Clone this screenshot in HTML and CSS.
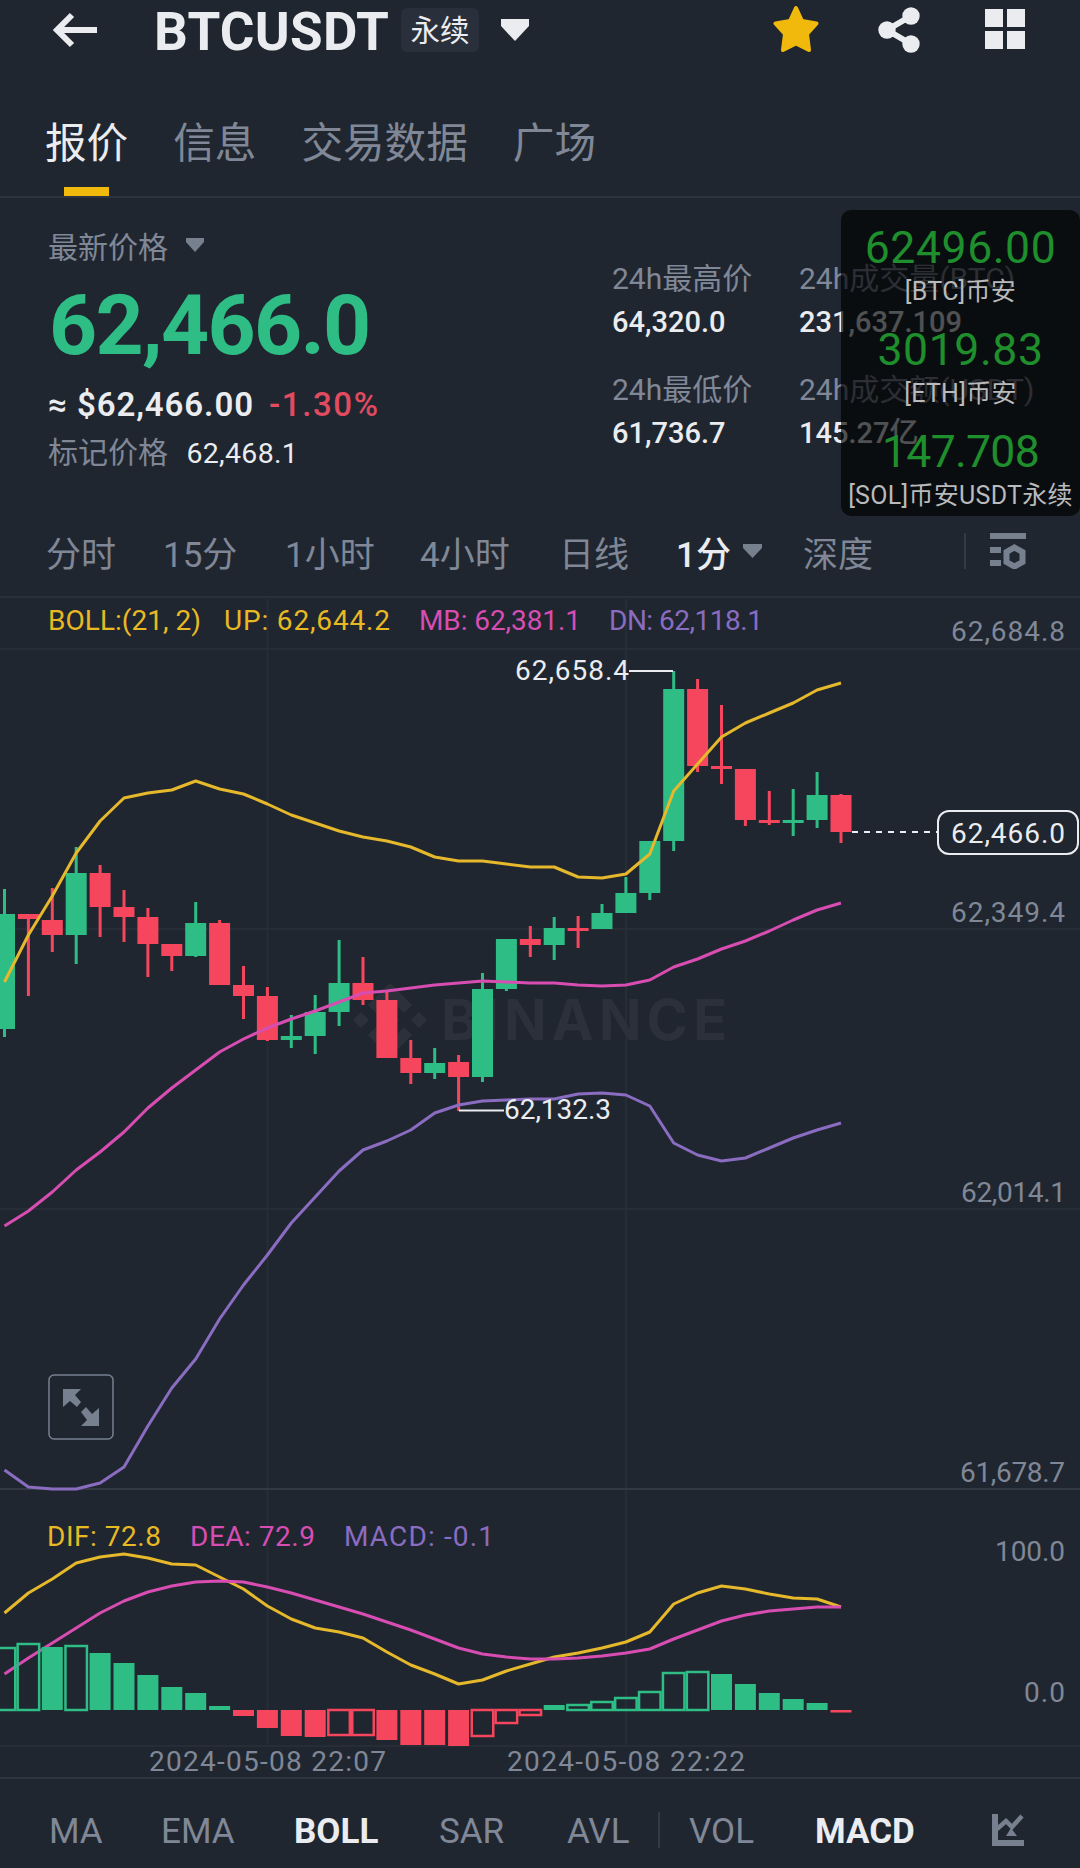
FILE: index.html
```html
<!DOCTYPE html>
<html lang="zh-CN">
<head>
    <meta charset="UTF-8">
    <meta name="viewport" content="width=device-width, initial-scale=1.0">
    <title>BTCUSDT 永续</title>
    <link rel="stylesheet" href="styles.css">
</head>
<body>
    <div class="app">
        <header class="header">
            <svg class="icon-back" width="46" height="36" viewBox="0 0 46 36">
                <path d="M20 3L5 18L20 33M5 18H45" fill="none" stroke="#eaecef" stroke-width="6"/>
            </svg>
            <h1 class="symbol">BTCUSDT</h1>
            <span class="badge">永续</span>
            <svg class="icon-caret" width="28" height="22" viewBox="0 0 28 22">
                <path d="M0 0H28V7L14 22L0 7Z" fill="#eaecef"/>
            </svg>
            <div class="actions">
                <svg class="icon-star" width="46" height="48" viewBox="0 0 46 48">
                    <path d="M23 3L29 16L43.500 18.500L34 29L36 45L23 38.500L10 45L12 29L2.500 18.500L17 16Z" fill="#f0b90b" stroke="#f0b90b" stroke-width="4" stroke-linejoin="round"/>
                </svg>
                <svg width="42" height="46" viewBox="0 0 42 46">
                    <path d="M33 9L9 23L33 37" fill="none" stroke="#eaecef" stroke-width="6"/>
                    <circle cx="33" cy="9" r="8.700" fill="#eaecef"/>
                    <circle cx="9" cy="23" r="8.700" fill="#eaecef"/>
                    <circle cx="33" cy="37" r="8.700" fill="#eaecef"/>
                </svg>
                <svg class="icon-grid" width="40" height="40" viewBox="0 0 40 40">
                    <path d="M0 0H18V18H0ZM22 0H40V18H22ZM0 22H18V40H0ZM22 22H40V40H22Z" fill="#eaecef"/>
                </svg>
            </div>
        </header>

        <nav class="tabs">
            <a class="tab active">报价</a>
            <a class="tab">信息</a>
            <a class="tab">交易数据</a>
            <a class="tab">广场</a>
        </nav>

        <section class="quote">
            <div class="price-box">
                <div class="price-label">最新价格
                    <svg width="18" height="14" viewBox="0 0 18 14"><path d="M0 0H18V4L9 14L0 4Z" fill="#76808f"/></svg>
                </div>
                <div class="price">62,466.0</div>
                <div class="fiat">≈ $62,466.00 <span class="change">-1.30%</span></div>
                <div class="mark">标记价格 <span>62,468.1</span></div>
            </div>
            <div class="stats">
                <div class="stat"><p>24h最高价</p><b>64,320.0</b></div>
                <div class="stat"><p>24h成交量(BTC)</p><b>231,637.109</b></div>
                <div class="stat"><p>24h最低价</p><b>61,736.7</b></div>
                <div class="stat"><p>24h成交额(USDT)</p><b>145.27亿</b></div>
            </div>
            <!-- 悬浮价格窗 -->
            <div class="floating">
                <div class="coin"><strong>62496.00</strong><span>[BTC]币安</span></div>
                <div class="coin"><strong>3019.83</strong><span>[ETH]币安</span></div>
                <div class="coin"><strong class="tight">147.708</strong><span>[SOL]币安USDT永续</span></div>
            </div>
        </section>

        <nav class="periods">
            <a>分时</a>
            <a>15分</a>
            <a>1小时</a>
            <a>4小时</a>
            <a>日线</a>
            <a class="active">1分 <svg width="19" height="14" viewBox="0 0 19 14"><path d="M0 0H19V4L9.500 14L0 4Z" fill="#76808f"/></svg></a>
            <a>深度</a>
            <i class="divider"></i>
            <svg width="36" height="36" viewBox="0 0 36 36">
                <path d="M0 0H36V6H0ZM0 14H11V20H0ZM0 27H11V33H0Z" fill="#76808f"/>
                <path d="M24.500 14.500L32.500 19V29L24.500 33.500L16.500 29V19Z" fill="none" stroke="#76808f" stroke-width="6"/>
            </svg>
        </nav>

        <div class="chart">
            <svg width="1080" height="1180" viewBox="0 598 1080 1180">
                <g class="grid">
                    <path d="M0 649H1080M0 929H1080M0 1209H1080M0 1746H1080M267.500 599V1746M626 599V1746"/>
                    <path class="strong" d="M0 1489H1080"/>
                </g>
                <!-- 水印 -->
                <g class="watermark">
                    <path d="M390 983L412 1005L404 1013L390 999L376 1013L368 1005ZM390 1057L412 1035L404 1027L390 1041L376 1027L368 1035ZM353 1020L361 1012L369 1020L361 1028ZM411 1020L419 1012L427 1020L419 1028ZM390 1011L399 1020L390 1029L381 1020Z"/>
                    <text x="441" y="1040" textLength="286">BINANCE</text>
                </g>
                <g id="candles"></g>
                <g id="lines"></g>
                <g id="macd"></g>

                <g class="legend">
                    <text class="up" x="48" y="630" textLength="153">BOLL:(21, 2)</text>
                    <text class="up" x="224" y="630" textLength="166">UP: 62,644.2</text>
                    <text class="mb" x="419" y="630" textLength="162">MB: 62,381.1</text>
                    <text class="dn" x="609" y="630" textLength="154">DN: 62,118.1</text>
                    <text class="up" x="47" y="1546" textLength="114">DIF: 72.8</text>
                    <text class="mb" x="190" y="1546" textLength="125">DEA: 72.9</text>
                    <text class="dn" x="344" y="1546" textLength="150">MACD: -0.1</text>
                </g>

                <g class="axis">
                    <text x="951" y="641" textLength="114">62,684.8</text>
                    <text x="951" y="922" textLength="114">62,349.4</text>
                    <text x="961" y="1202" textLength="105">62,014.1</text>
                    <text x="960" y="1482" textLength="105">61,678.7</text>
                    <text x="995" y="1561" textLength="70">100.0</text>
                    <text x="1024" y="1702" textLength="41">0.0</text>
                    <text x="149" y="1771" textLength="237">2024-05-08 22:07</text>
                    <text x="507" y="1771" textLength="238">2024-05-08 22:22</text>
                </g>

                <g class="marker">
                    <path d="M629 671H673M459 1110.500H504"/>
                    <path d="M852 832H937" stroke-dasharray="6 6"/>
                    <rect x="938" y="811" width="140" height="43" rx="11"/>
                    <text x="951" y="843" textLength="114">62,466.0</text>
                    <text x="515" y="680" textLength="114">62,658.4</text>
                    <text x="504" y="1119" textLength="107">62,132.3</text>
                </g>

                <g class="expand">
                    <rect x="49" y="1375" width="64" height="64" rx="5"/>
                    <path d="M63 1389H81L75 1395L81 1402L77 1407L70 1401L63 1407ZM99 1426H81L87 1420L81 1412L86 1407L92 1414L99 1408Z"/>
                </g>
            </svg>
        </div>

        <nav class="indicators">
            <a>MA</a>
            <a>EMA</a>
            <a class="active">BOLL</a>
            <a>SAR</a>
            <a>AVL</a>
            <i class="divider"></i>
            <a>VOL</a>
            <a class="active">MACD</a>
            <svg width="32" height="32" viewBox="0 0 32 32">
                <path d="M0 0H6V26H32V32H0Z" fill="#76808f"/>
                <path d="M5 15L14 7L20 13L30 2" fill="none" stroke="#76808f" stroke-width="4.500"/>
                <path d="M19 14L25 22H14Z" fill="#76808f"/>
            </svg>
        </nav>
    </div>
    <script src="kline.js"></script>
</body>
</html>
```
FILE: styles.css
```css
body {
    margin: 0;
    background: #1f2630;
    color: #eaecef;
    font-family: Roboto, 'Noto Sans CJK SC', sans-serif;
}
.app {
    width: 1080px;
    height: 1868px;
    overflow: hidden;
}
svg {
    display: block;
    flex: none;
}

/* header */
.header {
    display: flex;
    align-items: center;
    height: 60px;
    padding: 0 55px 0 52px;
}
.symbol {
    width: 232px;
    margin: 3px 0 0 56px;
    font-size: 53px;
    font-weight: 700;
    line-height: 60px;
    letter-spacing: 0.3px;
}
.badge {
    width: 78px;
    height: 44px;
    margin: -1px 22px 0 15px;
    border-radius: 6px;
    background: #29303b;
    font-size: 29.5px;
    line-height: 46px;
    text-align: center;
}
.actions {
    display: flex;
    align-items: center;
    margin-left: auto;
    gap: 59px;
}
.icon-star {
    margin-top: -3px;
}
.icon-grid {
    margin: -2px 0 0 6px;
}

/* tabs */
.tabs {
    display: flex;
    gap: 45px;
    height: 138px;
    padding-left: 45px;
    border-bottom: 2px solid #2d3440;
    box-sizing: border-box;
}
.tab {
    display: flex;
    flex-direction: column;
    align-items: center;
    justify-content: space-between;
    padding-top: 54px;
    color: #808796;
    font-size: 41.6px;
    line-height: 60px;
}
.tab.active {
    color: #eaecef;
}
.tab.active::after {
    content: "";
    width: 45px;
    height: 9px;
    background: #f0b90b;
}

/* quote */
.quote {
    position: relative;
    display: flex;
    height: 310px;
}
.price-box {
    flex: none;
    width: 612px;
    padding: 25px 0 0 48px;
    box-sizing: border-box;
}
.price-label {
    display: flex;
    align-items: center;
    gap: 18px;
    height: 44px;
    color: #808796;
    font-size: 30px;
}
.price {
    height: 112px;
    margin-left: 1px;
    color: #2ebd85;
    font-size: 84px;
    font-weight: 700;
    line-height: 118px;
    letter-spacing: -1.7px;
}
.fiat {
    height: 50px;
    font-size: 33px;
    font-weight: 600;
    line-height: 52px;
    letter-spacing: 0.9px;
}
.change {
    margin-left: 6px;
    color: #e04b60;
    font-weight: 500;
    letter-spacing: 1.6px;
}
.mark {
    color: #808796;
    font-size: 30px;
    line-height: 47px;
}
.mark span {
    margin-left: 11px;
    color: #eaecef;
    font-size: 28.5px;
    letter-spacing: 0.3px;
}
.stats {
    display: grid;
    grid-template-columns: 187px auto;
    grid-auto-rows: 111px;
    padding-top: 59px;
    white-space: nowrap;
}
.stat p {
    margin: 0;
    color: #808796;
    font-size: 30px;
    line-height: 44px;
}
.stat b {
    display: block;
    font-size: 29px;
    font-weight: 500;
    line-height: 43px;
}

.floating {
    position: absolute;
    top: 12px;
    left: 841px;
    width: 239px;
    height: 306px;
    padding-top: 11px;
    box-sizing: border-box;
    border-radius: 10px;
    background: rgba(0, 0, 0, 0.66);
    text-align: center;
    white-space: nowrap;
}
.coin {
    height: 102px;
}
.coin strong,
.coin span {
    display: block;
}
.coin strong {
    color: #1f8e2c;
    font-size: 44.5px;
    font-weight: 400;
    line-height: 54px;
    letter-spacing: 0.6px;
}
.coin .tight {
    letter-spacing: -0.7px;
}
.coin span {
    color: #b9babc;
    font-size: 25px;
    line-height: 34px;
    letter-spacing: 0.3px;
}

/* periods */
.periods {
    display: grid;
    grid-template-columns: 117px 122px 135px 139px 117px 127px 161px 26px 36px;
    align-items: center;
    height: 90px;
    padding: 0 0 2px 46px;
    border-bottom: 2px solid #29303a;
    box-sizing: border-box;
    color: #808796;
    font-size: 35px;
    white-space: nowrap;
}
.periods .active {
    display: flex;
    align-items: center;
    gap: 12px;
    color: #eaecef;
    font-weight: 500;
}
.divider {
    width: 2px;
    height: 36px;
    background: #323a46;
}

/* chart */
.chart text {
    font-size: 28px;
}
.grid path {
    fill: none;
    stroke: #262d37;
    stroke-width: 2;
}
.grid .strong {
    stroke: #323943;
}
.watermark {
    fill: #2b303b;
}
.chart .watermark text {
    font-family: Inter, sans-serif;
    font-size: 56px;
    font-weight: 700;
}
.legend .up { fill: #e8b923; }
.legend .mb { fill: #d84db2; }
.legend .dn { fill: #8a6cc0; }
.axis {
    fill: #808796;
}
.marker path,
.marker rect {
    fill: none;
    stroke: #eaecef;
    stroke-width: 2;
}
.marker text {
    fill: #eaecef;
}
.expand rect {
    fill: none;
    stroke: #76808f;
    stroke-width: 1.5;
}
.expand path {
    fill: #76808f;
}
#lines polyline {
    fill: none;
    stroke-width: 3;
    stroke-linejoin: round;
}

/* bottom indicators */
.indicators {
    display: grid;
    grid-template-columns: 112px 133px 145px 128px 91px 31px 126px 177px 32px;
    align-items: center;
    height: 90px;
    margin-top: -1px;
    padding: 16px 0 0 49px;
    border-top: 2px solid #2d3440;
    box-sizing: border-box;
    color: #808796;
    font-size: 35px;
}
.indicators .active {
    color: #eaecef;
    font-weight: 700;
}
.indicators .divider,
.indicators svg {
    margin-top: -3px;
}
```
FILE: kline.js
```javascript
const NS = 'http://www.w3.org/2000/svg';
const GREEN = '#2ebd85';
const RED = '#f6465d';
const STEP = 23.9;
const ZERO = 1710;

// [color, high, top, bottom, low]
const candles = [
    ['g', 889, 914, 1029, 1037], ['r', 914, 914, 919, 996], ['r', 888, 920, 935, 952],
    ['g', 847, 873, 935, 964], ['r', 865, 873, 907, 937], ['r', 890, 907, 917, 942],
    ['r', 908, 917, 944, 977], ['r', 944, 944, 956, 971], ['g', 902, 923, 956, 957],
    ['r', 920, 923, 985, 985], ['r', 966, 985, 996, 1019], ['r', 987, 996, 1040, 1041],
    ['g', 1015, 1036, 1040, 1048], ['g', 995, 1012, 1036, 1054], ['g', 940, 983, 1012, 1026],
    ['r', 957, 983, 1000, 1005], ['r', 992, 1000, 1058, 1058], ['r', 1040, 1058, 1073, 1084],
    ['g', 1048, 1063, 1073, 1079], ['r', 1055, 1062, 1077, 1111], ['g', 973, 989, 1077, 1082],
    ['g', 939, 939, 989, 991], ['r', 926, 939, 945, 957], ['g', 917, 928, 945, 960],
    ['r', 916, 928, 931, 948], ['g', 904, 913, 929, 929], ['g', 877, 893, 913, 913],
    ['g', 841, 841, 893, 900], ['g', 671, 689, 841, 851], ['r', 679, 689, 766, 772],
    ['r', 705, 766, 769, 784], ['r', 769, 769, 820, 826], ['r', 791, 820, 823, 825],
    ['g', 789, 820, 823, 836], ['g', 772, 795, 820, 828], ['r', 794, 795, 832, 843]
];

const up = [982, 935, 896, 853, 821, 798, 793, 790, 781, 789, 794, 804, 815, 823, 831, 837, 841, 847,
    857, 861, 861, 864, 867, 867, 877, 878, 874, 854, 791, 764, 737, 723, 713, 703, 690, 683];
const mb = [1226, 1211, 1192, 1170, 1152, 1132, 1108, 1088, 1070, 1052, 1039, 1028, 1019, 1011, 1002,
    993, 991, 988, 985, 983, 981, 982, 983, 983, 985, 986, 985, 980, 967, 959, 949, 941, 931, 920, 910, 903];
const dn = [1470, 1487, 1489, 1489, 1483, 1467, 1426, 1388, 1359, 1319, 1285, 1255, 1223, 1197, 1171,
    1150, 1141, 1130, 1113, 1105, 1101, 1100, 1099, 1099, 1094, 1093, 1095, 1106, 1143, 1155, 1161,
    1158, 1148, 1138, 1130, 1123];
const dif = [1613, 1593, 1579, 1563, 1557, 1554, 1558, 1564, 1565, 1577, 1589, 1606, 1619, 1628, 1632,
    1638, 1652, 1665, 1674, 1684, 1680, 1671, 1664, 1657, 1653, 1648, 1642, 1632, 1604, 1593, 1586,
    1589, 1594, 1598, 1599, 1607];
const dea = [1674, 1658, 1643, 1628, 1613, 1601, 1592, 1586, 1582, 1581, 1582, 1587, 1593, 1600, 1607,
    1614, 1622, 1630, 1639, 1648, 1654, 1657, 1659, 1659, 1658, 1656, 1653, 1649, 1639, 1630, 1621,
    1615, 1611, 1609, 1607, 1607];

const bars = [1648, 1644, 1647, 1646, 1653, 1663, 1675, 1687, 1693, 1706, 1716, 1728, 1736, 1737, 1735,
    1735, 1740, 1745, 1745, 1746, 1736, 1723, 1715, 1705, 1705, 1702, 1698, 1692, 1673, 1672, 1674,
    1684, 1693, 1699, 1703, 1712.5];
const hollow = [0, 1, 3, 14, 15, 20, 21, 22, 24, 25, 26, 27, 28, 29];

function add(parent, tag, attrs) {
    const el = document.createElementNS(NS, tag);
    for (const key in attrs) el.setAttribute(key, attrs[key]);
    document.getElementById(parent).appendChild(el);
}

const x = i => 4.5 + i * STEP;

candles.forEach(([c, high, top, bottom, low], i) => {
    const fill = c === 'g' ? GREEN : RED;
    add('candles', 'rect', { x: x(i) - 1.5, y: high, width: 3, height: low - high, fill });
    add('candles', 'rect', { x: x(i) - 10.5, y: top, width: 21, height: bottom - top, fill });
});

bars.forEach((y, i) => {
    const color = y < ZERO ? GREEN : RED;
    const top = Math.min(y, ZERO);
    const height = Math.abs(y - ZERO);
    if (hollow.includes(i)) {
        add('macd', 'rect', { x: x(i) - 10.75, y: top, width: 21.5, height, fill: 'none', stroke: color, 'stroke-width': 2.5 });
    } else {
        add('macd', 'rect', { x: x(i) - 10.5, y: top, width: 21, height, fill: color });
    }
});

function line(values, stroke) {
    add('lines', 'polyline', { points: values.map((y, i) => x(i) + ',' + y).join(' '), stroke });
}

line(up, '#e6b82c');
line(mb, '#d84db2');
line(dn, '#8a6cc0');
line(dif, '#e6b82c');
line(dea, '#d84db2');
```
